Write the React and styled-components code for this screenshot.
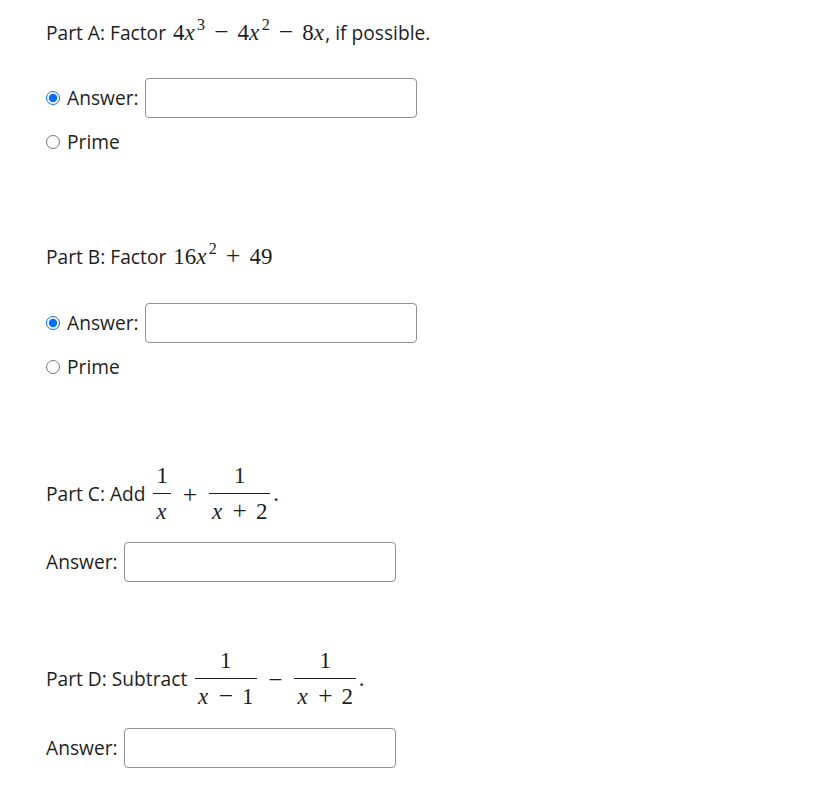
import React from "react";
import styled, { createGlobalStyle } from "styled-components";

const Global = createGlobalStyle`
  html, body { margin: 0; padding: 0; background: #ffffff; }
  body { font-family: "Open Sans", "Liberation Sans", sans-serif; color: #1e1e1e; }
`;

const Page = styled.div`
  padding: 12px 0 40px 46px;
  display: flex;
  flex-direction: column;
`;

const Question = styled.div`
  display: flex;
  align-items: center;
  min-height: 42px;
  font-size: 19.2px;
  line-height: 24px;
  margin-top: ${(p) => p.$top || 0}px;
  white-space: pre;
`;

const MathBlock = styled.span`
  font-family: "Liberation Serif", "DejaVu Serif", serif;
  font-size: 23px;
  display: inline-flex;
  align-items: center;
  white-space: nowrap;
`;

const MathInline = styled.span`
  font-family: "Liberation Serif", "DejaVu Serif", serif;
  font-size: 23px;
  white-space: nowrap;
  margin-left: 2px;
`;

const Var = styled.i`
  font-style: italic;
  margin-right: 0.06em;
`;

const Op = styled.span`
  font-size: 1.1em;
  line-height: 0;
  margin: 0 0.36em;
`;

const Sup = styled.sup`
  font-size: 0.7em;
  vertical-align: 0.6em;
  line-height: 0;
  margin-left: 1px;
`;

const Frac = styled.span`
  display: inline-flex;
  flex-direction: column;
  align-items: stretch;
  margin: 0 0.12em;
`;

const Num = styled.span`
  line-height: 1;
  padding: 0 3px 6px;
  text-align: center;
`;

const Bar = styled.span`
  height: 1px;
  background: #1e1e1e;
`;

const Den = styled.span`
  line-height: 1;
  padding: 6px 3px 0;
  text-align: center;
`;

const Dot = styled.span`
  align-self: center;
  line-height: 1;
`;

const Row = styled.label`
  display: flex;
  align-items: center;
  font-size: 19.2px;
  line-height: 24px;
  margin-top: ${(p) => p.$top || 0}px;
  min-height: ${(p) => (p.$tall ? 40 : 24)}px;
`;

const Radio = styled.input.attrs({ type: "radio" })`
  width: 14px;
  height: 14px;
  margin: 0 7px 0 0;
  accent-color: #0a6cff;
`;

const Field = styled.input.attrs({ type: "text" })`
  box-sizing: border-box;
  width: 272px;
  height: 40px;
  margin-left: 6px;
  border: 1px solid #8f8f8f;
  border-radius: 4px;
  font-size: 16px;
  padding: 0 8px;
  background: #fff;
`;

const Fraction = ({ num, den }) => (
  <Frac>
    <Num>{num}</Num>
    <Bar />
    <Den>{den}</Den>
  </Frac>
);

export default function App() {
  return (
    <>
      <Global />
      <Page>
        <Question>
          {"Part A: Factor "}
          <MathInline>
            4<Var>x</Var>
            <Sup>3</Sup>
            <Op>−</Op>4<Var>x</Var>
            <Sup>2</Sup>
            <Op>−</Op>8<Var>x</Var>
          </MathInline>
          {", if possible."}
        </Question>
        <Row $tall $top={24}>
          <Radio name="a" defaultChecked />
          Answer:
          <Field />
        </Row>
        <Row $top={12}>
          <Radio name="a" />
          Prime
        </Row>

        <Question $top={82}>
          {"Part B: Factor "}
          <MathInline>
            16<Var>x</Var>
            <Sup>2</Sup>
            <Op>+</Op>49
          </MathInline>
        </Question>
        <Row $tall $top={25}>
          <Radio name="b" defaultChecked />
          Answer:
          <Field />
        </Row>
        <Row $top={12}>
          <Radio name="b" />
          Prime
        </Row>

        <Question $top={85}>
          {"Part C: Add "}
          <MathBlock>
            <Fraction num="1" den={<Var>x</Var>} />
            <Op>+</Op>
            <Fraction
              num="1"
              den={
                <>
                  <Var>x</Var>
                  <Op>+</Op>2
                </>
              }
            />
            <Dot>.</Dot>
          </MathBlock>
        </Question>
        <Row $tall $top={19}>
          Answer:
          <Field />
        </Row>

        <Question $top={67}>
          {"Part D: Subtract "}
          <MathBlock>
            <Fraction
              num="1"
              den={
                <>
                  <Var>x</Var>
                  <Op>−</Op>1
                </>
              }
            />
            <Op>−</Op>
            <Fraction
              num="1"
              den={
                <>
                  <Var>x</Var>
                  <Op>+</Op>2
                </>
              }
            />
            <Dot>.</Dot>
          </MathBlock>
        </Question>
        <Row $tall $top={20}>
          Answer:
          <Field />
        </Row>
      </Page>
    </>
  );
}
